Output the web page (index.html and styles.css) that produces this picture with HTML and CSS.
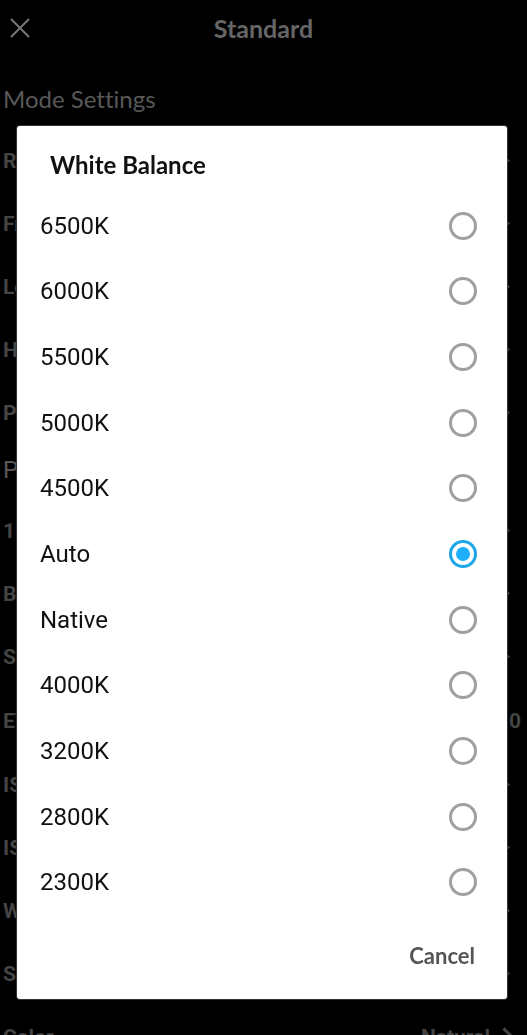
FILE: index.html
```
<!DOCTYPE html>
<html lang="en">
<head>
  <meta charset="UTF-8" />
  <meta name="viewport" content="width=device-width, initial-scale=1.0"/>
  <title>Standard - Mode Settings</title>
  <link rel="stylesheet" href="styles.css">
</head>
<body>

  <div class="screen">
    <header class="topbar">
      <button type="button" class="close" aria-label="Close">
        <svg width="20" height="20" viewBox="0 0 20 20"><path d="M1 1l18 18M19 1L1 19"/></svg>
      </button>
      <h1>Standard</h1>
    </header>

    <!-- Settings list behind the dialog -->
    <main>
      <h2>Mode Settings</h2>
      <ul class="settings">
        <li><span>Res</span><i class="chevron"></i></li>
        <li><span>Frame</span><i class="chevron"></i></li>
        <li><span>Lens</span><i class="chevron"></i></li>
        <li><span>Hyper</span><i class="chevron"></i></li>
        <li><span>Presets</span><i class="chevron"></i></li>
      </ul>
      <h2 class="protune">Protune</h2>
      <ul class="settings">
        <li><span>10-Bit</span><i class="chevron"></i></li>
        <li><span>Bit Rate</span><i class="chevron"></i></li>
        <li><span>Shutter</span><i class="chevron"></i></li>
        <li class="slider-row"><span>EV Comp</span><span class="value">0</span></li>
        <li><span>ISO Min</span><i class="chevron"></i></li>
        <li><span>ISO Max</span><i class="chevron"></i></li>
        <li><span>White</span><i class="chevron"></i></li>
        <li><span>Sharp</span><i class="chevron"></i></li>
        <li class="color-row"><span>Color</span><span class="value">Natural</span><i class="chevron"></i></li>
      </ul>
    </main>
  </div>

  <!-- White balance dialog -->
  <div class="overlay">
    <form class="dialog" role="dialog" aria-labelledby="dialog-title">
      <h2 id="dialog-title">White Balance</h2>
      <div class="options">
        <label><span>6500K</span><input type="radio" name="wb"></label>
        <label><span>6000K</span><input type="radio" name="wb"></label>
        <label><span>5500K</span><input type="radio" name="wb"></label>
        <label><span>5000K</span><input type="radio" name="wb"></label>
        <label><span>4500K</span><input type="radio" name="wb"></label>
        <label><span>Auto</span><input type="radio" name="wb" checked></label>
        <label><span>Native</span><input type="radio" name="wb"></label>
        <label><span>4000K</span><input type="radio" name="wb"></label>
        <label><span>3200K</span><input type="radio" name="wb"></label>
        <label><span>2800K</span><input type="radio" name="wb"></label>
        <label><span>2300K</span><input type="radio" name="wb"></label>
      </div>
      <div class="actions">
        <button type="button">Cancel</button>
      </div>
    </form>
  </div>

</body>
</html>
```
FILE: styles.css
```
* {
  margin: 0;
  padding: 0;
  box-sizing: border-box;
}

body {
  background: #000;
  font-family: Lato, sans-serif;
  font-variant-ligatures: none;
}

button {
  background: none;
  border: 0;
  font-family: inherit;
}

/* Dimmed settings screen */
.screen {
  height: 100vh;
  overflow: hidden;
  color: #595959;
}

.topbar {
  display: grid;
  grid-template-columns: 40px 1fr 40px;
  align-items: center;
  height: 56px;
}

.topbar h1 {
  font-size: 25px;
  line-height: 32px;
  font-weight: 700;
  text-align: center;
  color: #666;
}

.close {
  display: flex;
  justify-content: center;
}

.close svg {
  fill: none;
  stroke: #777;
  stroke-width: 2;
}

.screen h2 {
  padding: 27px 3px 14px;
  font-size: 24px;
  line-height: 32px;
  font-weight: 400;
}

.screen h2.protune {
  padding: 10px 3px 13px;
  font-family: Roboto, sans-serif;
}

.settings {
  list-style: none;
  font-family: Roboto, sans-serif;
  font-size: 21px;
  font-weight: 700;
  color: #444;
}

.settings li {
  display: flex;
  align-items: center;
  height: 63px;
  padding: 0 20px 0 3px;
}

.settings .slider-row {
  height: 65px;
  padding-right: 6px;
}

.settings .color-row {
  padding-right: 16px;
}

.settings span:first-child {
  flex: 1;
}

.chevron {
  width: 13px;
  height: 13px;
  margin-left: 8px;
  border: solid #444;
  border-width: 3px 3px 0 0;
  transform: rotate(45deg);
}

/* Dialog */
.overlay {
  position: fixed;
  inset: 0;
  padding: 126px 20px 0 17px;
}

.dialog {
  padding: 23px 30px 27px 23px;
  background: #fff;
  border-radius: 3px;
  box-shadow: 0 0 0 1px #333;
  color: #111;
}

.dialog h2 {
  padding-left: 10px;
  font-size: 24px;
  line-height: 32px;
  font-weight: 700;
}

.options {
  display: grid;
  grid-auto-rows: 1fr;
  min-height: 722px;
  margin-top: 12px;
  font-family: Roboto, sans-serif;
  font-size: 24px;
}

.options label {
  display: flex;
  justify-content: space-between;
  align-items: center;
}

.options input {
  appearance: none;
  width: 28px;
  height: 28px;
  border: 3px solid #a0a0a0;
  border-radius: 50%;
}

.options input:checked {
  padding: 4px;
  border-color: #1da7e8;
  background: #1eaefc content-box;
}

.actions {
  display: flex;
  justify-content: flex-end;
  padding: 25px 2px 0 0;
}

.actions button {
  font-size: 22px;
  line-height: 32px;
  font-weight: 700;
  color: #555;
}
```
